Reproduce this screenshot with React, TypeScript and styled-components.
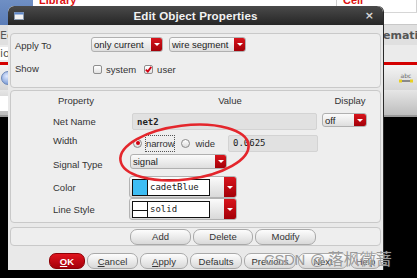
import React from "react";
import styled, { createGlobalStyle, css } from "styled-components";

const Global = createGlobalStyle`
  html, body { margin: 0; padding: 0; background: #000; }
  body { width: 417px; height: 278px; overflow: hidden; font-family: "Liberation Sans", Arial, sans-serif; }
`;

const Desktop = styled.div`
  position: relative;
  width: 417px;
  height: 278px;
  background: #000;
  overflow: hidden;
`;

/* ---------- background application window ---------- */
const BackWindow = styled.div`
  display: flex;
  flex-direction: column;
  height: 117px;
  background: #e4e4e4;
`;

const TopRow = styled.div`
  display: flex;
  height: 25px;
`;

const BlueBlock = styled.div`
  width: 33px;
  background: linear-gradient(#6f8fc4, #5b7db7);
`;

const Fields = styled.div`
  flex: 1;
  display: flex;
  flex-direction: column;
`;

const FieldLabels = styled.div`
  display: flex;
  height: 12px;
  background: #f4f4f4;
  overflow: hidden;
`;

const FieldLabel = styled.div<{ $w?: number }>`
  ${(p) => (p.$w ? css`width: ${p.$w}px;` : css`flex: 1;`)}
  border-right: 1px solid #d0d0d0;
  padding-left: 6px;
  color: #d11;
  font-weight: bold;
  font-size: 11px;
  line-height: 11px;
  margin-top: -5px;
  background: #fff;
`;

const FieldInputs = styled.div`
  flex: 1;
  background: #fff;
  border-top: 1px solid #d6d6d6;
  border-bottom: 1px solid #c8c8c8;
`;

const MenuRow = styled.div<{ $h: number; $bg: string }>`
  display: flex;
  justify-content: space-between;
  align-items: center;
  height: ${(p) => p.$h}px;
  background: ${(p) => p.$bg};
  color: #555;
  font-family: "DejaVu Sans", sans-serif;
  font-size: 11px;
  overflow: hidden;
`;

const EdgeText = styled.span<{ $bg?: string; $bold?: boolean }>`
  display: block;
  width: 34px;
  overflow: hidden;
  white-space: nowrap;
  background: ${(p) => p.$bg || "transparent"};
  font-weight: ${(p) => (p.$bold ? "bold" : "normal")};
`;

const RedLine = styled.div`
  height: 3px;
  background: #d40000;
`;

const Toolbar = styled.div`
  display: flex;
  justify-content: space-between;
  align-items: center;
  height: 25px;
  background: linear-gradient(#f4f4f4, #d6d6d6);
  padding: 0 4px 0 1px;
`;

const ToolCircle = styled.div`
  width: 12px;
  height: 12px;
  border-radius: 50%;
  background: radial-gradient(circle at 40% 35%, #dfe9ff, #5d84c8);
  border: 1px solid #6a86b8;
`;

const AbcIcon = styled.div`
  display: flex;
  flex-direction: column;
  align-items: center;
  font-family: "DejaVu Sans", sans-serif;
  font-size: 6px;
  color: #666;
  line-height: 6px;
`;

const BottomBar = styled.div`
  flex: 1;
  display: flex;
  justify-content: space-between;
  background: linear-gradient(#e6e6e6, #bdbdbd);
  border-bottom: 2px solid #9a9a9a;
`;

const WhiteStrip = styled.div`
  width: 8px;
  margin: 6px 0 4px;
  background: #fff;
`;

/* ---------- dialog ---------- */
const Dialog = styled.div`
  position: absolute;
  left: 8px;
  top: 6px;
  width: 375px;
  height: 264px;
  display: flex;
  flex-direction: column;
  background: #e9e9e9;
  border-radius: 6px 6px 0 0;
  box-shadow: 1px 0 0 #2a2a2a;
  overflow: hidden;
`;

const TitleBar = styled.div`
  position: relative;
  height: 19px;
  display: flex;
  align-items: center;
  justify-content: center;
  background: linear-gradient(#4a4a4a, #262626);
  border-radius: 6px 6px 0 0;
`;

const TitleIcon = styled.svg`
  position: absolute;
  left: 6px;
  top: 6px;
`;

const Title = styled.span`
  color: #f2f2f2;
  font-weight: bold;
  font-size: 11.6px;
  letter-spacing: 0.1px;
`;

const Close = styled.span`
  position: absolute;
  right: 9px;
  top: 3px;
  color: #d8d8d8;
  font-family: "DejaVu Sans", sans-serif;
  font-weight: bold;
  font-size: 11px;
`;

const Body = styled.div`
  flex: 1;
  display: flex;
  flex-direction: column;
  padding: 0 2px;
  font-size: 9.5px;
  color: #333;
`;

const Group = styled.div<{ $h: number; $mt: number }>`
  height: ${(p) => p.$h}px;
  margin-top: ${(p) => p.$mt}px;
  box-sizing: border-box;
  border: 1px solid #c9c9c9;
  border-radius: 4px;
  background: #eeeeee;
`;

const ApplyGroup = styled(Group)`
  display: grid;
  grid-template-columns: 76px 1fr;
  grid-template-rows: 15px 15px;
  row-gap: 10px;
  padding: 3px 0 0 4px;
  align-items: center;
`;

const GLabel = styled.span<{ $dy?: number }>`
  margin-top: ${(p) => (p.$dy || 0) * 2}px;
`;

const Inline = styled.div<{ $gap?: number }>`
  display: flex;
  align-items: center;
  gap: ${(p) => p.$gap ?? 6}px;
`;

const ComboBox = styled.div<{ $w: number; $h?: number; $top?: boolean }>`
  display: flex;
  width: ${(p) => p.$w}px;
  height: ${(p) => p.$h || 15}px;
  box-sizing: border-box;
  border: 1px solid #b0b0b0;
  border-radius: 3px;
  background: linear-gradient(#fbfbfb, #dedede);
  overflow: hidden;
  ${(p) => p.$top && css`align-self: flex-start;`}
`;

const ComboText = styled.span`
  flex: 1;
  padding-left: 2px;
  display: flex;
  align-items: center;
  color: #222;
  white-space: nowrap;
  overflow: hidden;
`;

const Arrow = styled.span<{ $w?: number }>`
  width: ${(p) => p.$w || 11}px;
  display: flex;
  align-items: center;
  justify-content: center;
  background: linear-gradient(#d8141c, #a30008);
  &::after {
    content: "";
    border-left: 3px solid transparent;
    border-right: 3px solid transparent;
    border-top: 3px solid #fff;
  }
`;

const CheckBox = styled.span<{ $ml?: number }>`
  width: 9px;
  height: 9px;
  margin-left: ${(p) => p.$ml || 0}px;
  box-sizing: border-box;
  border: 1px solid #8e8e8e;
  border-radius: 2px;
  background: linear-gradient(#fff, #e2e2e2);
  display: flex;
  align-items: center;
  justify-content: center;
`;

const PropGroup = styled(Group)`
  display: flex;
  flex-direction: column;
  padding: 2px 0 0 42px;
`;

const Row = styled.div<{ $h: number; $mt: number }>`
  display: flex;
  align-items: center;
  height: ${(p) => p.$h}px;
  margin-top: ${(p) => p.$mt}px;
`;

const LabelCell = styled.span<{ $pt?: number; $pb?: number }>`
  width: 77px;
  padding-top: ${(p) => p.$pt || 0}px;
  padding-bottom: ${(p) => p.$pb || 0}px;
  white-space: nowrap;
`;

const HeadCell = styled.span<{ $w: number; $pl?: number; $center?: boolean }>`
  width: ${(p) => p.$w}px;
  padding-left: ${(p) => p.$pl || 0}px;
  box-sizing: border-box;
  text-align: ${(p) => (p.$center ? "center" : "left")};
  white-space: nowrap;
`;

const ValueCell = styled.div`
  width: 192px;
  height: 100%;
  display: flex;
  align-items: center;
`;

const TextInput = styled.div<{ $w: number; $ml?: number; $bold?: boolean }>`
  width: ${(p) => p.$w}px;
  margin-left: ${(p) => p.$ml || 0}px;
  height: 17px;
  box-sizing: border-box;
  border: 1px solid #d3d3d3;
  border-radius: 2px;
  background: #e1e1e1;
  display: flex;
  align-items: center;
  padding-left: 4px;
  font-family: "DejaVu Sans Mono", monospace;
  font-size: 9px;
  font-weight: ${(p) => (p.$bold ? "bold" : "normal")};
  color: #222;
`;

const RadioGroup = styled.div`
  display: flex;
  align-items: center;
  padding-left: 3px;
`;

const Radio = styled.span<{ $on?: boolean; $ml?: number }>`
  width: 9px;
  height: 9px;
  margin-left: ${(p) => p.$ml || 0}px;
  margin-right: 3px;
  box-sizing: border-box;
  border-radius: 50%;
  border: 1px solid #8a8a8a;
  background: linear-gradient(#fff, #dcdcdc);
  display: flex;
  align-items: center;
  justify-content: center;
  ${(p) =>
    p.$on &&
    css`
      &::after {
        content: "";
        width: 4px;
        height: 4px;
        border-radius: 50%;
        background: #d00010;
      }
    `}
`;

const FocusLabel = styled.span`
  border: 1px dotted #555;
  padding: 2px 0;
  line-height: 11px;
  letter-spacing: -0.1px;
`;

const WideLabel = styled.span`
  margin-left: 2px;
`;

const SampleCombo = styled.div`
  display: flex;
  width: 108px;
  height: 22px;
  box-sizing: border-box;
  margin-left: -1px;
  border: 1px solid #b3b3b3;
  border-radius: 3px;
  background: linear-gradient(#fbfbfb, #d9d9d9);
  overflow: hidden;
`;

const SampleBox = styled.div`
  display: flex;
  width: 78px;
  height: 17px;
  margin: 2px 0 0 2px;
  box-sizing: border-box;
  border: 1px solid #111;
  background: #fff;
`;

const Swatch = styled.span<{ $color?: string; $line?: boolean }>`
  width: 14px;
  border-right: 1px solid #111;
  background: ${(p) => p.$color || "#fff"};
  ${(p) =>
    p.$line &&
    css`
      background: linear-gradient(
        transparent 8px,
        #111 8px,
        #111 9px,
        transparent 9px
      );
    `}
`;

const SampleText = styled.span`
  padding-left: 2px;
  font-family: "DejaVu Sans Mono", monospace;
  font-size: 9px;
  line-height: 15px;
  color: #222;
`;

const Spacer = styled.span`
  flex: 1;
`;

const ButtonGroup = styled(Group)`
  display: flex;
  align-items: center;
  gap: 2px;
  padding-left: 119px;
`;

const Btn = styled.span<{ $w: number; $primary?: boolean }>`
  width: ${(p) => p.$w}px;
  height: 16px;
  box-sizing: border-box;
  display: flex;
  align-items: center;
  justify-content: center;
  border: 1px solid #a9a9a9;
  border-radius: 7px;
  background: linear-gradient(#fdfdfd, #d9d9d9);
  color: #333;
  font-size: 9.5px;
  white-space: nowrap;
  ${(p) =>
    p.$primary &&
    css`
      border-color: #8d0006;
      background: linear-gradient(#e0141e, #a5000a);
      color: #fff;
      font-weight: bold;
    `}
`;

const BottomRow = styled.div`
  display: flex;
  align-items: center;
  gap: 2px;
  margin-top: 7px;
  height: 16px;
  padding-left: 39px;
`;

const Overlay = styled.svg`
  position: absolute;
  left: 0;
  top: 0;
  pointer-events: none;
`;

const Watermark = styled.span`
  position: absolute;
  left: 264px;
  top: 246px;
  display: flex;
  align-items: baseline;
  font-family: "Liberation Sans", sans-serif;
  font-size: 15px;
  color: #9a9a9a;
  text-shadow: 0 0 1px rgba(255, 255, 255, 0.5);
  letter-spacing: -0.4px;
  white-space: nowrap;
`;

const At = styled.span`
  margin: 0 3px 0 5px;
`;

const CJK = styled.span`
  font-family: "Noto Sans CJK SC", sans-serif;
  font-size: 16px;
  font-weight: 400;
  letter-spacing: 0;
`;

const Check = () => (
  <svg width="7" height="7" viewBox="0 0 7 7">
    <path d="M0.8 3.6 L2.8 5.6 L6.3 0.9" fill="none" stroke="#d00010" strokeWidth="1.8" />
  </svg>
);

export default function App() {
  return (
    <>
      <Global />
      <Desktop>
        <BackWindow>
          <TopRow>
            <BlueBlock />
            <Fields>
              <FieldLabels>
                <FieldLabel $w={297}>Library</FieldLabel>
                <FieldLabel>Cell</FieldLabel>
              </FieldLabels>
              <FieldInputs />
            </Fields>
          </TopRow>
          <MenuRow $h={20} $bg="#e0e0e0">
            <EdgeText>Ed</EdgeText>
            <EdgeText $bold>ematics</EdgeText>
          </MenuRow>
          <MenuRow $h={17} $bg="#ebebeb">
            <EdgeText $bg="#fff">io</EdgeText>
            <span />
          </MenuRow>
          <RedLine />
          <Toolbar>
            <ToolCircle />
            <AbcIcon>
              abc
              <svg width="14" height="4" viewBox="0 0 14 4">
                <line x1="1" y1="2" x2="13" y2="2" stroke="#333" strokeWidth="1" />
                <rect x="0" y="0.5" width="3" height="3" fill="#e8d020" />
                <rect x="11" y="0.5" width="3" height="3" fill="#e8d020" />
              </svg>
            </AbcIcon>
          </Toolbar>
          <BottomBar>
            <WhiteStrip />
          </BottomBar>
        </BackWindow>

        <Dialog>
          <TitleBar>
            <TitleIcon width="10" height="8" viewBox="0 0 10 8">
              <rect x="0.5" y="0.5" width="9" height="7" fill="#f2f2f2" stroke="#8a9ab0" />
              <rect x="0.5" y="0.5" width="9" height="2" fill="#5d86c9" />
            </TitleIcon>
            <Title>Edit Object Properties</Title>
            <Close>×</Close>
          </TitleBar>
          <Body>
            <ApplyGroup $h={55} $mt={8}>
              <GLabel $dy={1}>Apply To</GLabel>
              <Inline $gap={6}>
                <ComboBox $w={72}>
                  <ComboText>only current</ComboText>
                  <Arrow />
                </ComboBox>
                <ComboBox $w={77}>
                  <ComboText>wire segment</ComboText>
                  <Arrow />
                </ComboBox>
              </Inline>
              <GLabel $dy={-1}>Show</GLabel>
              <Inline $gap={5}>
                <Inline $gap={4}>
                  <CheckBox $ml={2} />
                  <span>system</span>
                </Inline>
                <Inline $gap={4}>
                  <CheckBox $ml={3}>
                    <Check />
                  </CheckBox>
                  <span>user</span>
                </Inline>
              </Inline>
            </ApplyGroup>

            <PropGroup $h={133} $mt={2}>
              <Row $h={13} $mt={1}>
                <HeadCell $w={77} $pl={5}>Property</HeadCell>
                <HeadCell $w={200} $center>Value</HeadCell>
                <HeadCell $w={40} $center>Display</HeadCell>
              </Row>
              <Row $h={17} $mt={6}>
                <LabelCell>Net Name</LabelCell>
                <ValueCell>
                  <TextInput $w={185} $ml={2} $bold>net2</TextInput>
                </ValueCell>
                <ComboBox $w={45} $h={14} $top>
                  <ComboText>off</ComboText>
                  <Arrow $w={12} />
                </ComboBox>
              </Row>
              <Row $h={18} $mt={4}>
                <LabelCell $pb={6}>Width</LabelCell>
                <ValueCell>
                  <RadioGroup>
                    <Radio $on />
                    <FocusLabel>narrow</FocusLabel>
                    <Radio $ml={6} />
                    <WideLabel>wide</WideLabel>
                  </RadioGroup>
                  <TextInput $w={90} $ml={13}>0.0625</TextInput>
                </ValueCell>
              </Row>
              <Row $h={15} $mt={2}>
                <LabelCell $pt={5}>Signal Type</LabelCell>
                <ValueCell>
                  <ComboBox $w={97}>
                    <ComboText>signal</ComboText>
                    <Arrow />
                  </ComboBox>
                </ValueCell>
              </Row>
              <Row $h={22} $mt={7}>
                <LabelCell>Color</LabelCell>
                <ValueCell>
                  <SampleCombo>
                    <SampleBox>
                      <Swatch $color="#3dbdf4" />
                      <SampleText>cadetBlue</SampleText>
                    </SampleBox>
                    <Spacer />
                    <Arrow $w={12} />
                  </SampleCombo>
                </ValueCell>
              </Row>
              <Row $h={22} $mt={0}>
                <LabelCell>Line Style</LabelCell>
                <ValueCell>
                  <SampleCombo>
                    <SampleBox>
                      <Swatch $line />
                      <SampleText>solid</SampleText>
                    </SampleBox>
                    <Spacer />
                    <Arrow $w={12} />
                  </SampleCombo>
                </ValueCell>
              </Row>
            </PropGroup>

            <ButtonGroup $h={19} $mt={4}>
              <Btn $w={61}>Add</Btn>
              <Btn $w={60}>Delete</Btn>
              <Btn $w={61}>Modify</Btn>
            </ButtonGroup>

            <BottomRow>
              <Btn $w={36} $primary>
                <u>O</u>K
              </Btn>
              <Btn $w={51}>
                <u>C</u>ancel
              </Btn>
              <Btn $w={48}>
                <u>A</u>pply
              </Btn>
              <Btn $w={52}>Defaults</Btn>
              <Btn $w={52}>Previous</Btn>
              <Btn $w={50}>Next</Btn>
              <Btn $w={31}>Help</Btn>
            </BottomRow>
          </Body>
        </Dialog>

        <Overlay width="417" height="278" viewBox="0 0 417 278">
          <ellipse
            cx="184.5"
            cy="152.5"
            rx="64.5"
            ry="27"
            transform="rotate(-7 184.5 152.5)"
            fill="none"
            stroke="#e4262c"
            strokeWidth="2.6"
          />
        </Overlay>
        <Watermark>
          CSDN<At>@</At>
          <CJK>落枫微蔷</CJK>
        </Watermark>
      </Desktop>
    </>
  );
}
